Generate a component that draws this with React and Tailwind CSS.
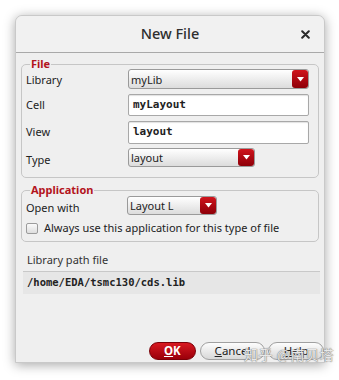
import React from "react";

const ui = { fontFamily: '"Noto Sans", "Open Sans", sans-serif' };
const mono = { fontFamily: '"DejaVu Sans Mono", "Liberation Mono", monospace' };

function Arrow() {
  return (
    <div className="w-[16px] self-stretch rounded-[3px] bg-gradient-to-b from-[#d0141c] to-[#8e0008] flex items-center justify-center">
      <svg width="7" height="5" viewBox="0 0 7 5">
        <path d="M0 0 L7 0 L3.5 4.5 Z" fill="#fff" />
      </svg>
    </div>
  );
}

function Combo({ text, w, h }) {
  return (
    <div
      className={`${w} ${h} flex rounded-[3px] border border-[#9a9a9a] bg-gradient-to-b from-[#ffffff] to-[#dcdcdc] text-[11px] text-[#222]`}
      style={ui}
    >
      <div className="flex-1 flex items-center pl-[2px] leading-none">{text}</div>
      <Arrow />
    </div>
  );
}

function Input({ text, h }) {
  return (
    <div
      className={`w-[181px] ${h} flex items-center pl-[4px] rounded-[2px] border border-[#a8a8a8] bg-white text-[11px] font-bold text-[#1e1e1e] shadow-[inset_0_1px_1px_rgba(0,0,0,0.12)]`}
      style={mono}
    >
      {text}
    </div>
  );
}

export default function App() {
  return (
    <div className="w-[339px] h-[380px] bg-white relative overflow-hidden" style={ui}>
      <div className="pt-[15px] pl-[15px]">
        <div className="w-[310px] h-[348px] bg-[#efefef] rounded-t-[7px] border border-[#c9c9c9] shadow-[0_2px_12px_rgba(0,0,0,0.35)] flex flex-col">
          {/* title bar */}
          <div className="h-[37px] shrink-0 flex items-center border-b border-[#a9a9a9] bg-[#f1f1f1] rounded-t-[7px] relative">
            <div className="flex-1 text-center text-[14.5px] text-[#2e2e2e] font-medium">New File</div>
            <div className="absolute right-[14px] top-[14px]">
              <svg width="9" height="9" viewBox="0 0 9 9">
                <path d="M1.2 1.2 L7.8 7.8 M7.8 1.2 L1.2 7.8" stroke="#2a2a2a" strokeWidth="2" strokeLinecap="round" />
              </svg>
            </div>
          </div>

          <div className="px-[5px] pt-[4px] flex flex-col">
            {/* File group */}
            <fieldset className="border border-[#c6c6c6] rounded-[5px] h-[121px] pl-[4px] pr-[9px]">
              <legend className="ml-[4px] px-[1px] text-[11px] font-bold text-[#b3141c] leading-[14px]">File</legend>
              <div className="flex flex-col">
                <div className="flex items-center justify-between h-[20px] mt-[-2px]">
                  <span className="text-[11px] text-[#222] mt-[2px]">Library</span>
                  <Combo text="myLib" w="w-[181px]" h="h-[20px]" />
                </div>
                <div className="flex items-center justify-between h-[22px] mt-[5px]">
                  <span className="text-[11px] text-[#222]">Cell</span>
                  <Input text="myLayout" h="h-[22px]" />
                </div>
                <div className="flex items-center justify-between h-[23px] mt-[5px]">
                  <span className="text-[11px] text-[#222]">View</span>
                  <Input text="layout" h="h-[23px]" />
                </div>
                <div className="flex items-center h-[19px] mt-[4px]">
                  <span className="text-[11px] text-[#222] w-[102px] mt-[6px]">Type</span>
                  <Combo text="layout" w="w-[127px]" h="h-[19px]" />
                </div>
              </div>
            </fieldset>

            {/* Application group */}
            <fieldset className="mt-[5px] border border-[#c6c6c6] rounded-[5px] h-[59px] pl-[4px] pr-[9px]">
              <legend className="ml-[4px] px-[1px] text-[11px] font-bold text-[#b3141c] leading-[14px]">Application</legend>
              <div className="flex items-center h-[19px] mt-[-1px]">
                <span className="text-[11px] text-[#222] w-[101px] mt-[5px]">Open with</span>
                <Combo text="Layout L" w="w-[90px]" h="h-[19px]" />
              </div>
              <div className="flex items-center mt-[5px]">
                <div className="w-[12px] h-[11px] rounded-[2px] border border-[#9c9c9c] bg-gradient-to-b from-[#fafafa] to-[#dedede]" />
                <span className="ml-[6px] text-[11px] text-[#222]">Always use this application for this type of file</span>
              </div>
            </fieldset>

            <div className="mt-[11px] ml-[6px] text-[11px] text-[#333] leading-[14px]">Library path file</div>
            <div className="mt-[4px] ml-[2px] w-[297px] h-[23px] flex items-center pl-[4px] bg-[#e6e6e6] border-t border-[#c8c8c8] text-[10.5px] font-bold text-[#222]" style={mono}>
              /home/EDA/tsmc130/cds.lib
            </div>
          </div>

          <div className="mt-auto mb-[1px] flex items-center pl-[133px] h-[20px]">
            <div className="w-[47px] h-[18px] rounded-full bg-gradient-to-b from-[#d81820] to-[#9a000a] border border-[#7a0008] flex items-center justify-center text-[11.5px] font-bold text-white">
              <span><span className="underline">O</span>K</span>
            </div>
            <div className="ml-[4px] w-[66px] h-[18px] rounded-full bg-gradient-to-b from-[#fdfdfd] to-[#d8d8d8] border border-[#a0a0a0] flex items-center justify-center text-[11.5px] text-[#222]">
              <span><span className="underline">C</span>ancel</span>
            </div>
            <div className="ml-[3px] w-[56px] h-[18px] rounded-full bg-gradient-to-b from-[#fdfdfd] to-[#d8d8d8] border border-[#a0a0a0] flex items-center justify-center text-[11.5px] text-[#222]">
              <span><span className="underline">H</span>elp</span>
            </div>
          </div>
        </div>
      </div>

      <div
        className="absolute left-[244px] top-[347px] text-[14px] text-[#e8e8e8] leading-none tracking-[0.5px]"
        style={{ fontFamily: '"Noto Sans CJK SC", sans-serif', textShadow: "0 0 1px #777, 0 0 1px #777" }}
      >
        知乎 @南贝塔
      </div>
    </div>
  );
}
